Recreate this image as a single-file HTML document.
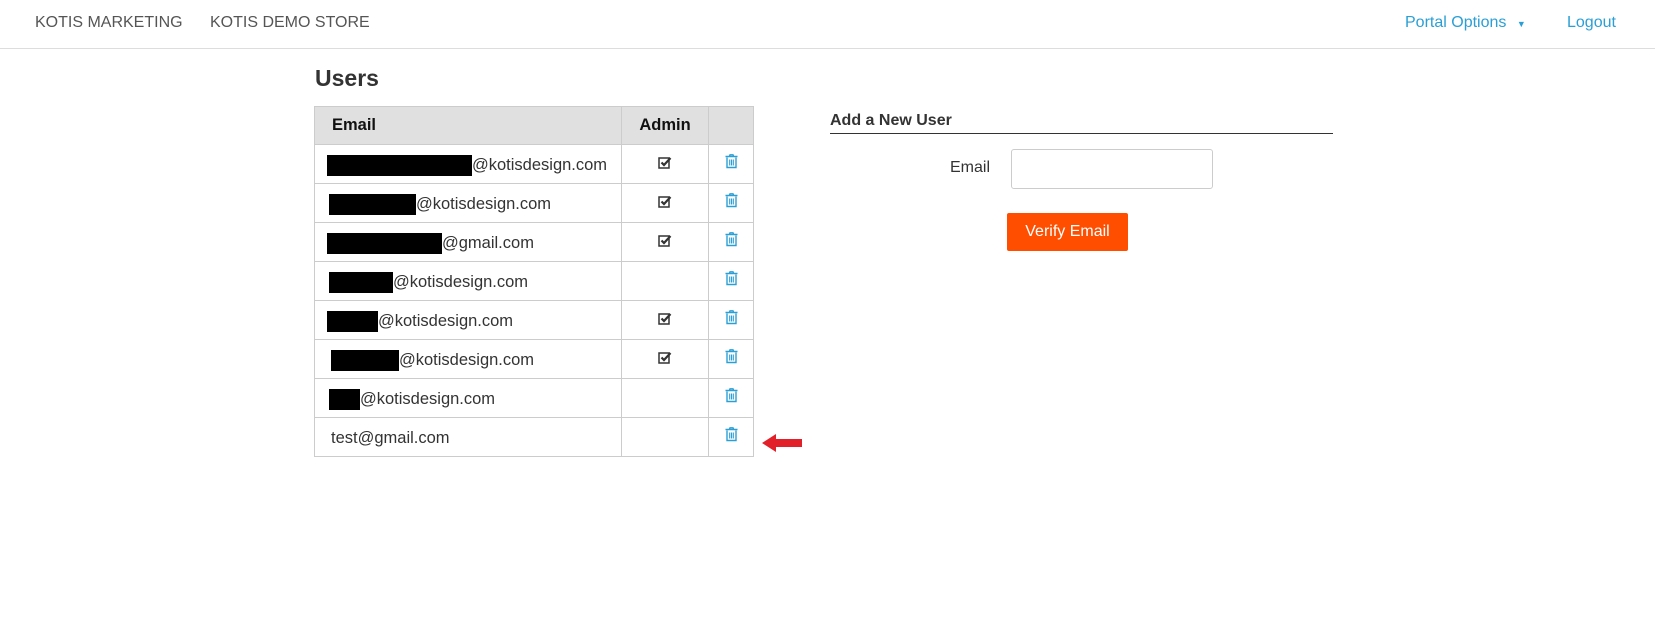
<!DOCTYPE html>
<html><head><style>
body{margin:0;width:1655px;height:630px;background:#fff;font-family:"Liberation Sans",sans-serif;color:#333;position:relative;overflow:hidden}
.nav{position:absolute;left:0;top:0;width:1655px;height:48px;border-bottom:1px solid #ddd}
.nav span{position:absolute;top:14px;font-size:16px}
h1{position:absolute;left:315px;top:65px;margin:0;font-size:23px;font-weight:bold;color:#333}
table{position:absolute;left:314px;top:106px;border-collapse:collapse;font-size:16.5px}
td,th{border:1px solid #ccc;height:38px;padding:0}
th{background:#e0e0e0;font-weight:bold;color:#111;text-align:left;height:37px}
.c1{width:306px}.c2{width:86px;text-align:center}.c3{width:44px;text-align:center}
.bx{display:inline-block;background:#000;height:21px;vertical-align:middle;margin-right:0}
.em{display:flex;align-items:center;padding-top:2px}
</style></head><body>
<div class="nav">
<span style="left:35px;color:#555">KOTIS MARKETING</span>
<span style="left:210px;color:#555">KOTIS DEMO STORE</span>
<span style="left:1405px;color:#2a9fd6">Portal Options <span style="position:static;font-size:9px;margin-left:6px">▼</span></span>
<span style="left:1567px;color:#2a9fd6">Logout</span>
</div>
<h1>Users</h1>
<table>
<tr><th class="c1" style="padding-left:17px;width:289px">Email</th><th class="c2" style="text-align:center">Admin</th><th class="c3"></th></tr>
<tr><td><div class="em"><span class="bx" style="margin-left:12px;width:145px"></span>@kotisdesign.com</div></td><td class="c2">☑</td><td class="c3 t"></td></tr>
<tr><td><div class="em"><span class="bx" style="margin-left:14px;width:87px"></span>@kotisdesign.com</div></td><td class="c2">☑</td><td class="c3 t"></td></tr>
<tr><td><div class="em"><span class="bx" style="margin-left:12px;width:115px"></span>@gmail.com</div></td><td class="c2">☑</td><td class="c3 t"></td></tr>
<tr><td><div class="em"><span class="bx" style="margin-left:14px;width:64px"></span>@kotisdesign.com</div></td><td class="c2"></td><td class="c3 t"></td></tr>
<tr><td><div class="em"><span class="bx" style="margin-left:12px;width:51px"></span>@kotisdesign.com</div></td><td class="c2">☑</td><td class="c3 t"></td></tr>
<tr><td><div class="em"><span class="bx" style="margin-left:16px;width:68px"></span>@kotisdesign.com</div></td><td class="c2">☑</td><td class="c3 t"></td></tr>
<tr><td><div class="em"><span class="bx" style="margin-left:14px;width:31px"></span>@kotisdesign.com</div></td><td class="c2"></td><td class="c3 t"></td></tr>
<tr><td><div class="em" style="padding-left:16px">test@gmail.com</div></td><td class="c2"></td><td class="c3 t"></td></tr>
</table>
<div style="position:absolute;left:830px;top:112px;width:503px;border-bottom:1.5px solid #333;font-weight:bold;font-size:16px;padding-bottom:3px">Add a New User</div>
<div style="position:absolute;left:950px;top:159px;font-size:16px">Email</div>
<div style="position:absolute;left:1011px;top:149px;width:200px;height:38px;border:1px solid #ccc;border-radius:3px"></div>
<div style="position:absolute;left:1007px;top:213px;width:121px;height:38px;background:#ff4e00;color:#fff;font-size:16px;line-height:38px;text-align:center;border-radius:2px">Verify Email</div>
<svg style="position:absolute;left:762px;top:433px" width="42" height="20"><path d="M0 10 L14 1 L14 6 L40 6 L40 14 L14 14 L14 19 Z" fill="#e2202a"/></svg>
<script>
var check='<svg width="14" height="13" viewBox="0 0 14 13"><rect x="1" y="2" width="10" height="10" fill="none" stroke="#333" stroke-width="1.5"/><path d="M3.5 6.5 L6 9 L12.5 2" fill="none" stroke="#333" stroke-width="2.2"/></svg>';
document.querySelectorAll('td.c2').forEach(function(t){if(t.textContent)t.innerHTML=check;});
var trash='<svg width="13" height="15" viewBox="0 0 13 15"><path d="M4.5 2 L5 0.8 H8 L8.5 2 M0.5 2.5 H12.5 M2 3.5 V13.5 H11 V3.5" fill="none" stroke="#2a9fd6" stroke-width="1.4"/><path d="M4.7 5.5 V11.5 M6.5 5.5 V11.5 M8.3 5.5 V11.5" stroke="#2a9fd6" stroke-width="1.1"/></svg>';
document.querySelectorAll('td.t').forEach(function(t){t.innerHTML=trash;});
</script>
</body></html>
